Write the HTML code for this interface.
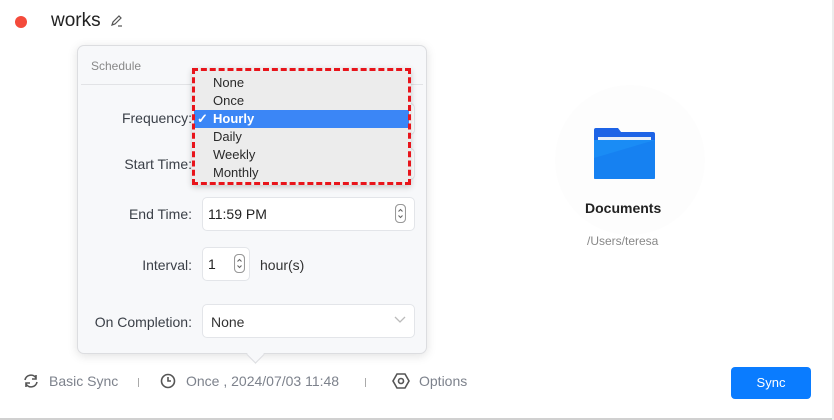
<!DOCTYPE html>
<html><head><style>
body{margin:0;width:834px;height:420px;background:#fff;font-family:"Liberation Sans",sans-serif;position:relative;overflow:hidden}
.a{position:absolute}
.lbl{position:absolute;right:642px;font-size:14px;color:#3a3f47;text-align:right}
.inp{position:absolute;background:#fff;border:1px solid #e3e5e9;border-radius:5px;box-sizing:border-box;font-size:14px;color:#222}
.step{position:absolute;width:11px;height:19px}
.it{position:absolute;left:213px;font-size:13px;color:#2a2a2a}
.bt{font-size:14px;color:#7d828c}
</style></head><body>
<div class="a" style="left:0;right:0;bottom:0;height:2px;background:#d0d0d0"></div>
<div class="a" style="right:0;top:0;bottom:0;width:2px;background:#ececec"></div>
<div class="a" style="left:15px;top:16px;width:12px;height:12px;border-radius:50%;background:#f44a3b"></div>
<div class="a" style="left:51px;top:10px;font-size:19px;color:#222">works</div>
<svg class="a" style="left:110px;top:14px" width="14" height="14" viewBox="0 0 14 14" fill="none" stroke="#555" stroke-width="1.2"><path d="M2 11l1-3 6-6 2 2-6 6-3 1z"/><path d="M8 12h4"/></svg>

<div class="a" style="left:555px;top:85px;width:150px;height:150px;border-radius:50%;background:#fdfdfd"></div>
<svg class="a" style="left:594px;top:128px" width="61" height="51" viewBox="0 0 61 51"><path d="M0 2q0-2 2-2h22l3 4h32q2 0 2 2v43q0 2-2 2H2q-2 0-2-2z" fill="#1d63e6"/><rect x="4" y="9" width="53" height="6" fill="#e8eef8"/><path d="M0 12h61v37q0 2-2 2H2q-2 0-2-2z" fill="#1a8cf5"/><path d="M0 30l61-18v39H0z" fill="#1479ee" opacity=".6"/></svg>
<div class="a" style="left:585px;top:200px;font-size:14px;font-weight:bold;color:#222">Documents</div>
<div class="a" style="left:587px;top:234px;font-size:12px;color:#888">/Users/teresa</div>

<div class="a" style="left:731px;top:367px;width:80px;height:32px;background:#0a7cff;border-radius:4px;color:#fff;font-size:13px;text-align:center;line-height:32px">Sync</div>

<svg class="a" style="left:22px;top:373px" width="18" height="16" viewBox="0 0 18 16" fill="none" stroke="#555" stroke-width="1.6"><path d="M3 7a6 6 0 0 1 11-2"/><path d="M15 9a6 6 0 0 1-11 2"/><path d="M14 2v4h-4" /><path d="M4 14v-4h4"/></svg>
<div class="a bt" style="left:49px;top:373px">Basic Sync</div>
<div class="a" style="left:138px;top:378px;width:1px;height:9px;background:#aaa"></div>
<svg class="a" style="left:160px;top:373px" width="16" height="16" viewBox="0 0 16 16" fill="none" stroke="#555" stroke-width="1.6"><circle cx="8" cy="8" r="6.5"/><path d="M8 4v4h3"/></svg>
<div class="a bt" style="left:186px;top:373px">Once , 2024/07/03 11:48</div>
<div class="a" style="left:365px;top:378px;width:1px;height:9px;background:#aaa"></div>
<svg class="a" style="left:392px;top:372px" width="18" height="18" viewBox="0 0 18 18" fill="none" stroke="#555" stroke-width="1.6"><path d="M5 2h8l4 7-4 7H5L1 9z"/><circle cx="9" cy="9" r="2.5"/></svg>
<div class="a bt" style="left:419px;top:373px">Options</div>

<div class="a" style="left:77px;top:45px;width:350px;height:309px;background:#f7f8fa;border:1px solid #dcdde0;border-radius:7px;box-sizing:border-box;box-shadow:0 2px 10px rgba(0,0,0,.12)"></div>
<div class="a" style="left:249px;top:348px;width:12px;height:12px;background:#f7f8fa;transform:rotate(45deg);border-right:1px solid #dcdde0;border-bottom:1px solid #dcdde0"></div>
<div class="a" style="left:91px;top:59px;font-size:12px;color:#888">Schedule</div>
<div class="a" style="left:81px;top:84px;width:342px;height:1px;background:#e2e3e6"></div>

<div class="lbl" style="top:110px">Frequency:</div>
<div class="lbl" style="top:156px">Start Time:</div>
<div class="lbl" style="top:206px">End Time:</div>
<div class="lbl" style="top:257px">Interval:</div>
<div class="lbl" style="top:314px">On Completion:</div>

<div class="inp" style="left:202px;top:103px;width:213px;height:32px"></div>
<div class="inp" style="left:202px;top:148px;width:213px;height:32px"></div>
<div class="inp" style="left:202px;top:197px;width:213px;height:34px;padding:8px 5px">11:59 PM</div>
<svg class="step" style="left:395px;top:204px" viewBox="0 0 11 19" fill="none" stroke="#666" stroke-width="1.1"><rect x=".5" y=".5" width="10" height="18" rx="4" stroke="#999"/><path d="M3.5 7.5l2-2 2 2M3.5 11.5l2 2 2-2"/></svg>
<div class="inp" style="left:202px;top:247px;width:48px;height:34px;padding:8px 5px">1</div>
<svg class="step" style="left:234px;top:254px" viewBox="0 0 11 19" fill="none" stroke="#666" stroke-width="1.1"><rect x=".5" y=".5" width="10" height="18" rx="4" stroke="#999"/><path d="M3.5 7.5l2-2 2 2M3.5 11.5l2 2 2-2"/></svg>
<div class="a" style="left:260px;top:257px;font-size:14px;color:#333">hour(s)</div>
<div class="inp" style="left:202px;top:304px;width:213px;height:34px;padding:9px 8px;color:#333">None</div>
<svg class="a" style="left:394px;top:316px" width="12" height="8" viewBox="0 0 12 8" fill="none" stroke="#bbb" stroke-width="1.3"><path d="M1 1l5 5 5-5"/></svg>

<div class="a" style="left:192px;top:68px;width:219px;height:117px;background:#ececec;box-shadow:0 2px 6px rgba(0,0,0,.2)"></div>
<div class="a" style="left:194px;top:110px;width:215px;height:18px;background:#3b86f6"></div>
<div class="it" style="top:75px">None</div>
<div class="it" style="top:93px">Once</div>
<div class="it" style="top:111px;color:#fff;font-weight:bold"><span style="position:absolute;left:-16px">✓</span>Hourly</div>
<div class="it" style="top:129px">Daily</div>
<div class="it" style="top:147px">Weekly</div>
<div class="it" style="top:165px">Monthly</div>
<div class="a" style="left:192px;top:68px;width:219px;height:117px;border:3px dashed #e8141b;box-sizing:border-box"></div>
</body></html>
